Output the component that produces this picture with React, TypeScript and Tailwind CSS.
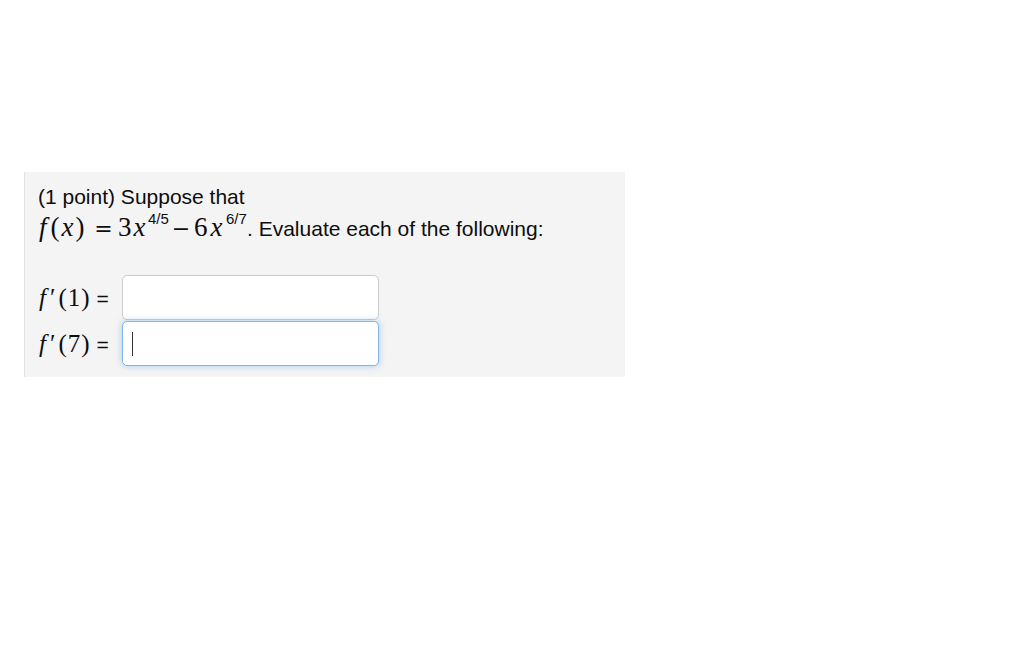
const serif = { fontFamily: '"Liberation Serif", "Times New Roman", serif' };
const op = { fontFamily: '"DejaVu Serif", "Liberation Serif", serif' };

function Label({ arg }: { arg: string }) {
  return (
    <span className="w-[84px] shrink-0 flex items-baseline leading-none">
      <span className="text-[25px] inline-flex items-baseline" style={serif}>
        <i className="ml-[1px]">f</i>
        <span className="ml-[4px] mr-[3px]">′</span>
        <span>(</span>
        <span className="mx-[1px]">{arg}</span>
        <span>)</span>
      </span>
      <span className="ml-[7px] text-[21px]">=</span>
    </span>
  );
}

export default function App() {
  return (
    <div
      className="min-h-screen bg-white pt-[172px] pl-[24px]"
      style={{ fontFamily: '"Liberation Sans", Helvetica, Arial, sans-serif' }}
    >
      <div className="w-[601px] h-[205px] bg-[#f4f4f4] border-l border-[#e2e2e2] pl-[13px] pt-[13px] text-[21px] text-[#0d0d0d]">
        <div className="leading-[24px]">(1 point) Suppose that</div>

        {/* f(x) = 3x^{4/5} - 6x^{6/7} */}
        <div className="mt-[5px] flex items-baseline leading-none">
          <span className="w-[51px] text-[27px] inline-flex items-baseline" style={serif}>
            <i className="ml-[1px] mr-[4px]">f</i>
            <span>(</span>
            <i className="ml-[2px] mr-[2px]">x</i>
            <span>)</span>
          </span>
          <span className="w-[29px] text-[22px] text-center" style={op}>=</span>
          <span className="w-[28px] text-[27px] inline-flex items-baseline" style={serif}>
            <span className="mr-[2px]">3</span>
            <i>x</i>
          </span>
          <span className="w-[22px] pl-[2px] text-[15px] relative -top-[12px]">4/5</span>
          <span className="w-[26px] text-[22px] text-center" style={op}>−</span>
          <span className="w-[30px] text-[27px] inline-flex items-baseline" style={serif}>
            <span className="mr-[3px]">6</span>
            <i>x</i>
          </span>
          <span className="w-[22px] pl-[2px] text-[15px] relative -top-[12px]">6/7</span>
          <span className="ml-[1px]">. Evaluate each of the following:</span>
        </div>

        <div className="mt-[34px] flex flex-col gap-[1px]">
          <div className="flex items-center">
            <Label arg="1" />
            <input className="w-[257px] h-[45px] bg-white border border-[#cbcbcb] rounded-[5px] outline-none px-[9px]" />
          </div>
          <div className="flex items-center">
            <Label arg="7" />
            <div className="w-[257px] h-[45px] bg-white border border-[#80b4ec] rounded-[5px] shadow-[0_0_7px_rgba(102,166,235,0.5)] flex items-center px-[9px]">
              <div className="w-px h-[24px] bg-[#333]" />
            </div>
          </div>
        </div>
      </div>
    </div>
  );
}
